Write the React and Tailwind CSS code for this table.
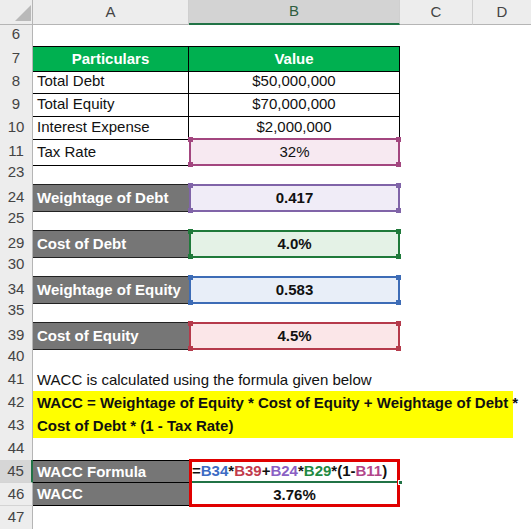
import React from "react";

const COLS = "grid grid-cols-[33px_156px_211px_73px_58px]";

function RowHead({ n, active }) {
  return (
    <div
      className={
        "flex items-center justify-center border-b border-[#d4d4d4] text-[15px] text-[#444] " +
        (active
          ? "bg-[#d6d6d6] border-r-2 border-r-[#217346]"
          : "bg-[#ededed] border-r border-r-[#b5b5b5]")
      }
    >
      {n}
    </div>
  );
}

function Row({ n, active, children }) {
  return (
    <div className={`${COLS} h-[23px]`}>
      <RowHead n={n} active={active} />
      {children}
    </div>
  );
}

function Empty() {
  return <div />;
}

function Corners({ color }) {
  return (
    <>
      <span className={`absolute -left-[3px] -top-[3px] h-[5px] w-[5px] ${color}`} />
      <span className={`absolute -right-[3px] -top-[3px] h-[5px] w-[5px] ${color}`} />
      <span className={`absolute -left-[3px] -bottom-[3px] h-[5px] w-[5px] ${color}`} />
      <span className={`absolute -right-[3px] -bottom-[3px] h-[5px] w-[5px] ${color}`} />
    </>
  );
}

function Highlight({ cls, corner, bold, children }) {
  return (
    <div
      className={`relative flex items-center justify-center border-2 pt-[1px] text-[15px] text-[#111] ${
        bold ? "font-bold" : ""
      } ${cls}`}
    >
      {children}
      <Corners color={corner} />
    </div>
  );
}

function GrayLabel({ children }) {
  return (
    <div className="flex items-center border-y border-[#222] bg-[#767676] pl-[4px] pt-[1px] text-[15px] font-bold text-white">
      {children}
    </div>
  );
}

function TableRow({ n, label, value, first }) {
  return (
    <Row n={n}>
      <div
        className={`flex items-center border-b border-r border-black pl-[4px] pt-[1px] text-[15px] text-[#111] ${
          first ? "border-t" : ""
        }`}
      >
        {label}
      </div>
      <div
        className={`flex items-center justify-center border-b border-r border-black pt-[1px] text-[15px] text-[#111] ${
          first ? "border-t" : ""
        }`}
      >
        {value}
      </div>
      <Empty />
      <Empty />
    </Row>
  );
}

export default function App() {
  return (
    <div
      className="h-[529px] w-[531px] overflow-hidden bg-white"
      style={{ fontFamily: '"Liberation Sans", Arial, sans-serif' }}
    >
      {/* column headers */}
      <div className={`${COLS} h-[23px] text-[15px] text-[#444]`}>
        <div className="relative border-b border-r border-[#b5b5b5] bg-[#ededed]">
          <svg className="absolute left-[15px] top-[5px]" width="16" height="16" viewBox="0 0 16 16">
            <polygon points="16,0 16,16 0,16" fill="#b9b9b9" />
          </svg>
        </div>
        <div className="flex items-center justify-center border-b border-r border-b-[#b5b5b5] border-r-[#cfcfcf] bg-[#ededed]">
          A
        </div>
        <div className="flex items-center justify-center border-b-2 border-r border-b-[#217346] border-r-[#cfcfcf] bg-[#d3d3d3] text-[#2e5e40]">
          B
        </div>
        <div className="flex items-center justify-center border-b border-r border-b-[#b5b5b5] border-r-[#cfcfcf] bg-[#ededed]">
          C
        </div>
        <div className="flex items-center justify-center border-b border-b-[#b5b5b5] bg-[#ededed]">
          D
        </div>
      </div>

      <Row n={6}>
        <Empty />
        <Empty />
        <Empty />
        <Empty />
      </Row>

      <Row n={7}>
        <div className="flex items-center justify-center border-y border-r border-black bg-[#00b050] pt-[1px] text-[15px] font-bold text-white">
          Particulars
        </div>
        <div className="flex items-center justify-center border-y border-r border-black bg-[#00b050] pt-[1px] text-[15px] font-bold text-white">
          Value
        </div>
        <Empty />
        <Empty />
      </Row>

      <TableRow n={8} label="Total Debt" value="$50,000,000" />
      <TableRow n={9} label="Total Equity" value="$70,000,000" />
      <TableRow n={10} label="Interest Expense" value="$2,000,000" />

      <Row n={11}>
        <div className="flex items-center border-b border-black pl-[4px] pt-[1px] text-[15px] text-[#111]">
          Tax Rate
        </div>
        <Highlight cls="border-[#a3467f] bg-[#f7e9f1]" corner="bg-[#a3467f]">
          32%
        </Highlight>
        <Empty />
        <Empty />
      </Row>

      <Row n={23}>
        <Empty />
        <Empty />
        <Empty />
        <Empty />
      </Row>

      <Row n={24}>
        <GrayLabel>Weightage of Debt</GrayLabel>
        <Highlight cls="border-[#8064a8] bg-[#f0ecf7]" corner="bg-[#8064a8]" bold>
          0.417
        </Highlight>
        <Empty />
        <Empty />
      </Row>

      <Row n={25}>
        <Empty />
        <Empty />
        <Empty />
        <Empty />
      </Row>

      <Row n={29}>
        <GrayLabel>Cost of Debt</GrayLabel>
        <Highlight cls="border-[#1f7a3a] bg-[#e4f2e6]" corner="bg-[#1f7a3a]" bold>
          4.0%
        </Highlight>
        <Empty />
        <Empty />
      </Row>

      <Row n={30}>
        <Empty />
        <Empty />
        <Empty />
        <Empty />
      </Row>

      <Row n={34}>
        <GrayLabel>Weightage of Equity</GrayLabel>
        <Highlight cls="border-[#3d6cb6] bg-[#e8eef8]" corner="bg-[#3d6cb6]" bold>
          0.583
        </Highlight>
        <Empty />
        <Empty />
      </Row>

      <Row n={35}>
        <Empty />
        <Empty />
        <Empty />
        <Empty />
      </Row>

      <Row n={39}>
        <GrayLabel>Cost of Equity</GrayLabel>
        <Highlight cls="border-[#b53a4b] bg-[#fbe6e8]" corner="bg-[#b53a4b]" bold>
          4.5%
        </Highlight>
        <Empty />
        <Empty />
      </Row>

      <Row n={40}>
        <Empty />
        <Empty />
        <Empty />
        <Empty />
      </Row>

      <Row n={41}>
        <div className="col-span-4 flex items-center whitespace-nowrap pl-[4px] pt-[1px] text-[15px] text-[#111]">
          WACC is calculated using the formula given below
        </div>
      </Row>

      <Row n={42}>
        <div className="col-span-4 flex">
          <div className="flex w-[480px] items-center whitespace-nowrap bg-[#ffff00] pl-[4px] pt-[1px] text-[15px] font-bold text-[#111]">
            WACC = Weightage of Equity * Cost of Equity + Weightage of Debt *
          </div>
        </div>
      </Row>

      <Row n={43}>
        <div className="col-span-4 flex">
          <div className="flex w-[480px] items-center whitespace-nowrap bg-[#ffff00] pl-[4px] pt-[1px] text-[15px] font-bold text-[#111]">
            Cost of Debt * (1 - Tax Rate)
          </div>
        </div>
      </Row>

      <Row n={44}>
        <Empty />
        <Empty />
        <Empty />
        <Empty />
      </Row>

      {/* rows 45-46 */}
      <div className={`${COLS} grid-rows-[23px_23px]`}>
        <RowHead n={45} active />
        <div className="flex items-center border-t border-b border-black bg-[#767676] pl-[4px] pt-[1px] text-[15px] font-bold text-white">
          WACC Formula
        </div>
        <div className="relative row-span-2 -my-[1px] flex flex-col border-[3px] border-[#e00000] text-[15px] font-bold text-[#111]">
          <div className="flex h-[21px] items-center whitespace-nowrap border-b-2 border-[#217346] pl-[0px]">
            <span>=</span>
            <span className="text-[#3d6cc4]">B34</span>
            <span>*</span>
            <span className="text-[#c23a4c]">B39</span>
            <span>+</span>
            <span className="text-[#8a60c4]">B24</span>
            <span>*</span>
            <span className="text-[#1f8a43]">B29</span>
            <span>*(1-</span>
            <span className="text-[#b2458a]">B11</span>
            <span>)</span>
          </div>
          <div className="flex flex-1 items-center justify-center pt-[1px]">3.76%</div>
          <span className="absolute -right-[6px] top-[18px] h-[5px] w-[5px] border border-white bg-[#217346]" />
        </div>
        <Empty />
        <Empty />
        <RowHead n={46} />
        <div className="flex items-center border-b border-black bg-[#767676] pl-[4px] pt-[1px] text-[15px] font-bold text-white">
          WACC
        </div>
        <Empty />
        <Empty />
      </div>

      <Row n={47}>
        <Empty />
        <Empty />
        <Empty />
        <Empty />
      </Row>
    </div>
  );
}
